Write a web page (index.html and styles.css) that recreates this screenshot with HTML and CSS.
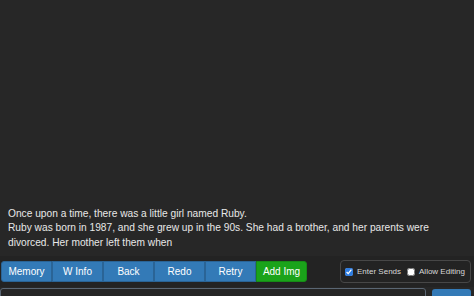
FILE: index.html
```html
<!DOCTYPE html>
<html lang="en">
<head>
    <meta charset="UTF-8">
    <meta name="viewport" content="width=device-width, initial-scale=1.0">
    <title>Story</title>
    <link rel="stylesheet" href="styles.css">
</head>
<body>
    <div class="story">
        <p>Once upon a time, there was a little girl named Ruby.<br>
        Ruby was born in 1987, and she grew up in the 90s. She had a brother, and her parents were divorced. Her mother left them when</p>
    </div>

    <div class="controls">
        <div class="btn-group">
            <button class="btn">Memory</button>
            <button class="btn">W Info</button>
            <button class="btn">Back</button>
            <button class="btn">Redo</button>
            <button class="btn">Retry</button>
            <button class="btn btn-green">Add Img</button>
        </div>
        <div class="options">
            <label><input type="checkbox" checked> Enter Sends</label>
            <label><input type="checkbox"> Allow Editing</label>
        </div>
    </div>

    <div class="input-row">
        <textarea class="input"></textarea>
        <button class="send" aria-label="Submit"></button>
    </div>
</body>
</html>
```

FILE: styles.css
```css
body {
    margin: 0;
    background-color: #272727;
    font-family: "Liberation Sans", Arial, sans-serif;
    color: #e8e8e8;
    overflow: hidden;
}
.story {
    height: 256px;
    display: flex;
    flex-direction: column;
    justify-content: flex-end;
    padding: 0 30px 0 8px;
}
.story p {
    margin: 0 0 6px 0;
    font-size: 10.2px;
    line-height: 14.5px;
}
.controls {
    height: 31px;
    background-color: #232323;
    display: flex;
    align-items: center;
    justify-content: space-between;
    padding: 0 3px 0 1px;
}
.btn-group {
    display: flex;
}
.btn {
    width: 51px;
    height: 21px;
    padding: 0;
    background-color: #337ab7;
    border: 1px solid #2a6496;
    color: white;
    font-family: inherit;
    font-size: 10px;
    cursor: pointer;
}
.btn:first-child {
    border-radius: 3px 0 0 3px;
}
.btn-green {
    background-color: #1aa31a;
    border-color: #168c16;
    border-radius: 0 3px 3px 0;
}
.options {
    width: 131px;
    height: 23px;
    border: 1px solid #474747;
    border-radius: 4px;
    display: flex;
    align-items: center;
    gap: 6px;
    padding-left: 4px;
    box-sizing: border-box;
    font-size: 8px;
    color: #d8d8d8;
}
.options label {
    display: flex;
    align-items: center;
    gap: 4px;
}
.options input {
    width: 8px;
    height: 8px;
    margin: 0;
    accent-color: #2f7de1;
}
.input-row {
    display: flex;
    gap: 6px;
    padding: 1px 3px 0 0;
}
.input {
    flex: 1;
    height: 30px;
    background-color: #262626;
    border: 1px solid #5a6673;
    border-radius: 3px;
    resize: none;
}
.send {
    width: 39px;
    height: 30px;
    margin-top: 1px;
    background-color: #337ab7;
    border: none;
    border-radius: 3px;
}
```
